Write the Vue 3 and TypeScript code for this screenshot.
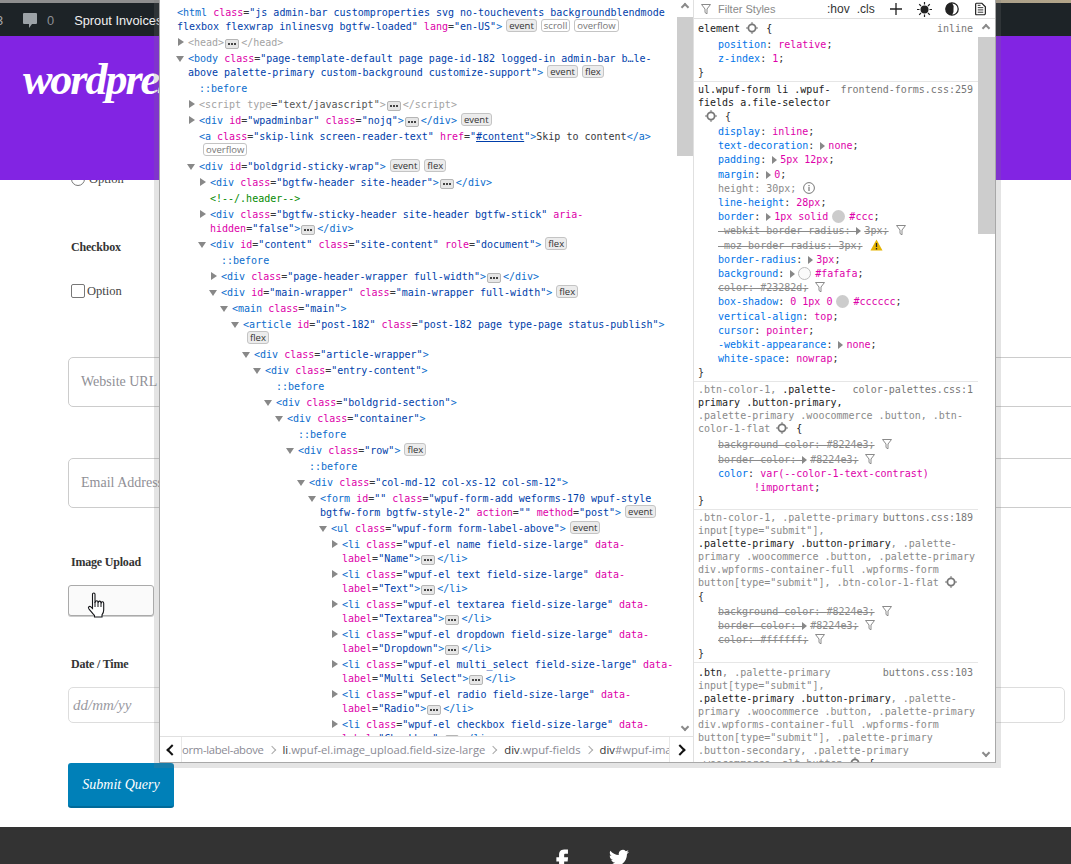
<template>
  <div class="page">
    <div class="top-strip"></div>
    <div class="adminbar">
      <span class="ab-count">3</span>
      <svg class="ab-bubble" width="14" height="15" viewBox="0 0 14 15"><path d="M1 0h12a1 1 0 0 1 1 1v9a1 1 0 0 1-1 1H9l-3 4v-4H1a1 1 0 0 1-1-1V1a1 1 0 0 1 1-1z" fill="#9ca2a7" /></svg>
      <span class="ab-zero">0</span>
      <span class="ab-link">Sprout Invoices</span>
    </div>
    <header class="site-head">
      <div class="logo">wordpress</div>
    </header>

    <main class="form-area">
      <div class="choice radio-row"><span class="radio"></span>Option</div>
      <div class="field-label checkbox-label">Checkbox</div>
      <div class="choice checkbox-row"><span class="check"></span>Option</div>
      <div class="text-input url-input">Website URL</div>
      <div class="text-input email-input">Email Address</div>
      <div class="field-label image-label">Image Upload</div>
      <div class="file-button">
        <svg class="hand" width="20" height="26" viewBox="0 0 20 26">
          <path d="M5.5 2.2c0-1.600 2.500-1.600 2.500 0v8l.5-.2c0-1.700 2.400-1.700 2.500 0l.4.2c.1-1.500 2.400-1.500 2.500.2l.4.300c.3-1.300 2.300-1.200 2.400.5v6.800c0 2.500-.8 3.700-1.700 4.800v2.200H7.500v-1.600c-1.800-1.600-3.500-4.200-5.600-6.600-1.300-1.600.6-3.200 2-1.900l1.600 1.500z" fill="#fff" stroke="#15161a" stroke-width="1.100" />
          <path d="M8 10v5M11 10v5M14 10.500V15" stroke="#15161a" fill="none" />
        </svg>
      </div>
      <div class="field-label date-label">Date / Time</div>
      <div class="date-input">dd/mm/yy</div>
      <button class="submit">Submit Query</button>
    </main>

    <footer class="site-foot">
      <svg width="16" height="26" viewBox="5 0 14 24"><path d="M14 8.500V6.300c0-.9.6-1.100 1-1.100h2.500V1.300H14c-3.800 0-4.700 2.800-4.700 4.600v2.600H6.800v4h2.500V24H14V12.500h3.200l.4-4z" fill="#fff" /></svg>
      <svg width="20" height="20" viewBox="0 0 24 24"><path d="M23.953 4.570a10 10 0 0 1-2.825.775 4.958 4.958 0 0 0 2.163-2.723c-.951.555-2.005.959-3.127 1.184a4.920 4.920 0 0 0-8.384 4.482C7.690 8.095 4.067 6.130 1.640 3.162a4.822 4.822 0 0 0-.666 2.475c0 1.710.870 3.213 2.188 4.096a4.904 4.904 0 0 1-2.228-.616v.060a4.923 4.923 0 0 0 3.946 4.827 4.996 4.996 0 0 1-2.212.085 4.936 4.936 0 0 0 4.604 3.417 9.867 9.867 0 0 1-6.102 2.105c-.39 0-.779-.023-1.170-.067a13.995 13.995 0 0 0 7.557 2.209c9.053 0 13.998-7.496 13.998-13.985 0-.21 0-.42-.015-.63A9.935 9.935 0 0 0 24 4.590z" fill="#fff" /></svg>
    </footer>

    <!-- devtools window floats over the page -->
    <section class="devtools">
      <div class="markup-pane">
        <div class="markup-scroll">
          <div
            v-for="(row, i) in markupRows"
            :key="i"
            class="node"
            :class="{ dim: row.dim }"
            :style="{ marginLeft: row.depth * 11 + 'px' }"
          >
            <span v-if="row.arrow" class="twisty" :class="row.arrow"></span>
            <template v-for="(t, j) in tokenize(row.text)" :key="j">
              <span v-if="t.kind === 'more'" class="more"><i></i><i></i><i></i></span>
              <span v-else-if="t.kind === 'badge'" class="badge">{{ t.text }}</span>
              <span v-else-if="t.kind === 'badge-off'" class="badge off">{{ t.text }}</span>
              <span v-else :class="'t-' + t.kind">{{ t.text }}</span>
            </template>
          </div>
        </div>
        <div class="scrollbar">
          <span class="sb-up"></span>
          <span class="sb-thumb markup-thumb"></span>
          <span class="sb-down"></span>
        </div>
        <div class="crumbs">
          <span class="crumb-btn"><span class="chev left"></span></span>
          <div class="crumb-list">
            <span class="c-grey c-first">orm-label-above</span>
            <span class="c-sep"></span>
            <span><b>li</b><span class="c-grey">.wpuf-el.image_upload.field-size-large</span></span>
            <span class="c-sep"></span>
            <span><b>div</b><span class="c-grey">.wpuf-fields</span></span>
            <span class="c-sep"></span>
            <span><b>div</b><span class="c-grey">#wpuf-image-upload</span></span>
          </div>
          <span class="crumb-btn right-btn"><span class="chev right"></span></span>
        </div>
      </div>

      <div class="rules-pane">
        <div class="toolbar">
          <svg class="funnel bar-funnel" width="10" height="11" viewBox="0 0 10 11"><path d="M.5.5h9L6 5v4.800L4 8.500V5z" fill="#fff" stroke="#8a8a8a" /></svg>
          <span class="filter-text">Filter Styles</span>
          <span class="tb-text hov">:hov</span>
          <span class="tb-text">.cls</span>
          <svg class="tb-icon tb-plus" width="12" height="12" viewBox="0 0 12 12"><path d="M6 0v12M0 6h12" stroke="#222" stroke-width="1.300" /></svg>
          <svg class="tb-icon tb-sun" width="15" height="15" viewBox="0 0 15 15"><circle cx="7.500" cy="7.500" r="4" fill="#222" /><path d="M7.500 0v2.500M7.500 12.500V15M0 7.500h2.500M12.500 7.500H15M2.200 2.200l1.800 1.800M11 11l1.800 1.800M2.200 12.800L4 11M11 4l1.800-1.800" stroke="#222" stroke-width="1.200" /></svg>
          <svg class="tb-icon tb-moon" width="14" height="14" viewBox="0 0 14 14"><circle cx="7" cy="7" r="6.200" fill="#fff" stroke="#222" stroke-width="1.300" /><path d="M7 .8a6.200 6.200 0 0 0 0 12.400 7.500 7.500 0 0 0 1.500-6.200A7.500 7.500 0 0 0 7 .8z" fill="#222" /></svg>
          <svg class="tb-icon tb-doc" width="11" height="14" viewBox="0 0 12 14"><path d="M1.500.7h6L11.300 4.500v7.300a1.500 1.500 0 0 1-1.500 1.500H1.500A1 1 0 0 1 .7 12V1.500a1 1 0 0 1 .8-.8z" fill="#fff" stroke="#222" stroke-width="1.300" /><path d="M3 5.500h6M3 8h6M3 10.500h6M3 3h3" stroke="#222" /></svg>
        </div>

        <div class="rules-scroll">
          <div v-for="(rule, i) in rules" :key="i" class="rule">
            <span class="source">{{ rule.source }}</span>
            <div class="selector">
              <span v-for="(part, j) in rule.selector" :key="j" :class="{ unmatched: j % 2 === 0 }">{{ part }}</span>
              <svg v-if="rule.braceBelow !== 'icon'" class="node-icon" width="12" height="12" viewBox="0 0 12 12"><use href="#node-glyph" /></svg>
              <template v-if="!rule.braceBelow"> {</template>
            </div>
            <div v-if="rule.braceBelow === 'icon'" class="brace-line"><svg class="node-icon first" width="12" height="12" viewBox="0 0 12 12"><use href="#node-glyph" /></svg> {</div>
            <div v-else-if="rule.braceBelow === 'plain'" class="brace-line">{</div>
            <div v-for="(d, j) in rule.decls" :key="j" class="decl" :class="{ inactive: d.info }">
              <span :class="{ struck: d.over }"><span class="prop">{{ d.name }}</span>: <span v-if="d.tri" class="tri"></span><span v-if="d.pre" class="val pre">{{ d.pre }} </span><span v-if="d.swatch" class="swatch" :class="{ light: d.swatch === '#fafafa' }" :style="{ background: d.swatch }"></span><span class="val">{{ d.value }}</span>;</span>
              <svg v-if="d.filter" class="funnel" width="10" height="11" viewBox="0 0 10 11"><path d="M.5.5h9L6 5v4.800L4 8.500V5z" fill="#fff" stroke="#8a8a8a" /></svg>
              <svg v-if="d.warn" class="warn" width="13" height="12" viewBox="0 0 13 12"><path d="M6.500.5l6 11H.5z" fill="#e5b400" /><path d="M6.500 4v4M6.500 9v1.500" stroke="#222" stroke-width="1.300" /></svg>
              <svg v-if="d.info" class="info" width="12" height="12" viewBox="0 0 12 12"><circle cx="6" cy="6" r="5.400" fill="none" stroke="#777" /><path d="M6 5v4M6 3v1.200" stroke="#777" stroke-width="1.200" /></svg>
            </div>
            <div v-if="rule.decls.length" class="close-brace">}</div>
          </div>
        </div>
        <div class="scrollbar rules-bar">
          <span class="sb-up rules-up"></span>
          <span class="sb-thumb rules-thumb"></span>
          <span class="sb-down"></span>
        </div>
      </div>
    </section>

    <svg width="0" height="0" class="glyph-defs">
      <symbol id="node-glyph" viewBox="0 0 12 12">
        <circle cx="6" cy="6" r="3.600" fill="#fff" stroke="#777" stroke-width="1.800" />
        <path d="M6 0v2.500M6 9.500V12M0 6h2.500M9.500 6H12" stroke="#777" />
      </symbol>
    </svg>
  </div>
</template>

<script setup lang="ts">
interface MarkupRow {
  depth: number
  arrow?: 'open' | 'closed'
  dim?: boolean
  text: string
}

interface Token {
  kind: string
  text: string
}

interface Decl {
  name: string
  value: string
  pre?: string
  over?: boolean
  tri?: boolean
  swatch?: string
  filter?: boolean
  warn?: boolean
  info?: boolean
}

interface Rule {
  source: string
  selector: string[]
  braceBelow?: 'icon' | 'plain'
  decls: Decl[]
}

// [[x]] is a badge, [[~x]] a light badge and [[.]] the collapsed-children pill
const markupRows: MarkupRow[] = [
  { depth: 0, text: '<html class="js admin-bar customproperties svg no-touchevents backgroundblendmode\nflexbox flexwrap inlinesvg bgtfw-loaded" lang="en-US">[[event]][[~scroll]][[~overflow]]' },
  { depth: 1, arrow: 'closed', dim: true, text: '<head>[[.]]</head>' },
  { depth: 1, arrow: 'open', text: '<body class="page-template-default page page-id-182 logged-in admin-bar b…le-\nabove palette-primary custom-background customize-support">[[event]][[flex]]' },
  { depth: 2, text: '::before' },
  { depth: 2, arrow: 'closed', dim: true, text: '<script type="text/javascript">[[.]]</' + 'script>' },
  { depth: 2, arrow: 'closed', text: '<div id="wpadminbar" class="nojq">[[.]]</div>[[event]]' },
  { depth: 2, text: '<a class="skip-link screen-reader-text" href="#content">Skip to content</a>\n[[~overflow]]' },
  { depth: 2, arrow: 'open', text: '<div id="boldgrid-sticky-wrap">[[event]][[flex]]' },
  { depth: 3, arrow: 'closed', text: '<div class="bgtfw-header site-header">[[.]]</div>' },
  { depth: 3, text: '<!--/.header-->' },
  { depth: 3, arrow: 'closed', text: '<div class="bgtfw-sticky-header site-header bgtfw-stick" aria-\nhidden="false">[[.]]</div>' },
  { depth: 3, arrow: 'open', text: '<div id="content" class="site-content" role="document">[[flex]]' },
  { depth: 4, text: '::before' },
  { depth: 4, arrow: 'closed', text: '<div class="page-header-wrapper full-width">[[.]]</div>' },
  { depth: 4, arrow: 'open', text: '<div id="main-wrapper" class="main-wrapper full-width">[[flex]]' },
  { depth: 5, arrow: 'open', text: '<main class="main">' },
  { depth: 6, arrow: 'open', text: '<article id="post-182" class="post-182 page type-page status-publish">\n[[flex]]' },
  { depth: 7, arrow: 'open', text: '<div class="article-wrapper">' },
  { depth: 8, arrow: 'open', text: '<div class="entry-content">' },
  { depth: 9, text: '::before' },
  { depth: 9, arrow: 'open', text: '<div class="boldgrid-section">' },
  { depth: 10, arrow: 'open', text: '<div class="container">' },
  { depth: 11, text: '::before' },
  { depth: 11, arrow: 'open', text: '<div class="row">[[flex]]' },
  { depth: 12, text: '::before' },
  { depth: 12, arrow: 'open', text: '<div class="col-md-12 col-xs-12 col-sm-12">' },
  { depth: 13, arrow: 'open', text: '<form id="" class="wpuf-form-add weforms-170 wpuf-style\nbgtfw-form bgtfw-style-2" action="" method="post">[[event]]' },
  { depth: 14, arrow: 'open', text: '<ul class="wpuf-form form-label-above">[[event]]' },
  { depth: 15, arrow: 'closed', text: '<li class="wpuf-el name field-size-large" data-\nlabel="Name">[[.]]</li>' },
  { depth: 15, arrow: 'closed', text: '<li class="wpuf-el text field-size-large" data-\nlabel="Text">[[.]]</li>' },
  { depth: 15, arrow: 'closed', text: '<li class="wpuf-el textarea field-size-large" data-\nlabel="Textarea">[[.]]</li>' },
  { depth: 15, arrow: 'closed', text: '<li class="wpuf-el dropdown field-size-large" data-\nlabel="Dropdown">[[.]]</li>' },
  { depth: 15, arrow: 'closed', text: '<li class="wpuf-el multi_select field-size-large" data-\nlabel="Multi Select">[[.]]</li>' },
  { depth: 15, arrow: 'closed', text: '<li class="wpuf-el radio field-size-large" data-\nlabel="Radio">[[.]]</li>' },
  { depth: 15, arrow: 'closed', text: '<li class="wpuf-el checkbox field-size-large" data-\nlabel="Checkbox">[[.]]</li>' },
]

const tokenPattern = /\[\[(.+?)\]\]|<!--[\s\S]*?-->|::before|<\/?\w+|\/?>|([\w-]+\n?[\w-]*)=|"[^"]*"|[^<>"[\w-]+|[\w-]+|./g

function tokenize(text: string): Token[] {
  const tokens: Token[] = []
  for (const m of text.matchAll(tokenPattern)) {
    const s = m[0]
    if (m[1] === '.') tokens.push({ kind: 'more', text: '' })
    else if (m[1]?.startsWith('~')) tokens.push({ kind: 'badge-off', text: m[1].slice(1) })
    else if (m[1]) tokens.push({ kind: 'badge', text: m[1] })
    else if (s.startsWith('<!--')) tokens.push({ kind: 'comment', text: s })
    else if (s === '::before' || s.startsWith('<') || s === '>') tokens.push({ kind: 'tag', text: s })
    else if (m[2]) tokens.push({ kind: 'attr', text: m[2] }, { kind: 'plain', text: '=' })
    else if (s === '"#content"') {
      tokens.push({ kind: 'value', text: '"' }, { kind: 'link', text: '#content' }, { kind: 'value', text: '"' })
    } else if (s.startsWith('"')) tokens.push({ kind: 'value', text: s })
    else tokens.push({ kind: 'plain', text: s })
  }
  return tokens
}

// odd selector parts are the ones that match the selected element
const rules: Rule[] = [
  {
    source: 'inline',
    selector: ['', 'element'],
    decls: [
      { name: 'position', value: 'relative' },
      { name: 'z-index', value: '1' },
    ],
  },
  {
    source: 'frontend-forms.css:259',
    selector: ['', 'ul.wpuf-form li .wpuf-\nfields a.file-selector'],
    braceBelow: 'icon',
    decls: [
      { name: 'display', value: 'inline' },
      { name: 'text-decoration', value: 'none', tri: true },
      { name: 'padding', value: '5px 12px', tri: true },
      { name: 'margin', value: '0', tri: true },
      { name: 'height', value: '30px', info: true },
      { name: 'line-height', value: '28px' },
      { name: 'border', pre: '1px solid', value: '#ccc', tri: true, swatch: '#ccc' },
      { name: '-webkit-border-radius', value: '3px', over: true, tri: true, filter: true },
      { name: '-moz-border-radius', value: '3px', over: true, warn: true },
      { name: 'border-radius', value: '3px', tri: true },
      { name: 'background', value: '#fafafa', tri: true, swatch: '#fafafa' },
      { name: 'color', value: '#23282d', over: true, filter: true },
      { name: 'box-shadow', pre: '0 1px 0', value: '#cccccc', swatch: '#ccc' },
      { name: 'vertical-align', value: 'top' },
      { name: 'cursor', value: 'pointer' },
      { name: '-webkit-appearance', value: 'none', tri: true },
      { name: 'white-space', value: 'nowrap' },
    ],
  },
  {
    source: 'color-palettes.css:1',
    selector: ['.btn-color-1, ', '.palette-\nprimary .button-primary,', '\n.palette-primary .woocommerce .button, .btn-\ncolor-1-flat'],
    decls: [
      { name: 'background-color', value: '#8224e3', over: true, filter: true },
      { name: 'border-color', value: '#8224e3', over: true, tri: true, filter: true },
      { name: 'color', value: 'var(--color-1-text-contrast)\n      !important' },
    ],
  },
  {
    source: 'buttons.css:189',
    selector: ['.btn-color-1, .palette-primary\ninput[type="submit"],\n', '.palette-primary .button-primary', ', .palette-\nprimary .woocommerce .button, .palette-primary\ndiv.wpforms-container-full .wpforms-form\nbutton[type="submit"], .btn-color-1-flat'],
    braceBelow: 'plain',
    decls: [
      { name: 'background-color', value: '#8224e3', over: true, filter: true },
      { name: 'border-color', value: '#8224e3', over: true, tri: true, filter: true },
      { name: 'color', value: '#ffffff', over: true, filter: true },
    ],
  },
  {
    source: 'buttons.css:103',
    selector: ['', '.btn', ', .palette-primary\ninput[type="submit"],\n', '.palette-primary .button-primary', ', .palette-\nprimary .woocommerce .button, .palette-primary\ndiv.wpforms-container-full .wpforms-form\nbutton[type="submit"], .palette-primary\n.button-secondary, .palette-primary\n.woocommerce .alt.button'],
    decls: [],
  },
]
</script>

<style scoped>
.page {
  position: relative;
  width: 1071px;
  height: 864px;
  overflow: hidden;
  background: #fff;
  display: flex;
  flex-direction: column;
  font-family: "Liberation Serif", serif;
}
.top-strip {
  height: 3px;
  background: linear-gradient(90deg, #8e8e8e 0%, #8e8e8e 70%, #b3a589 100%);
}
.adminbar {
  height: 33px;
  flex: none;
  box-sizing: border-box;
  padding-top: 2px;
  background: #1d2327;
  color: #f0f0f1;
  display: flex;
  align-items: center;
  font-family: "Liberation Sans", sans-serif;
  font-size: 12.800px;
  position: relative;
  z-index: 2;
}
.ab-count {
  margin-left: -4px;
  color: #a7aaad;
  width: 27px;
}
.ab-bubble {
  flex: none;
}
.ab-zero {
  margin-left: 10px;
  color: #8c8f94;
}
.ab-link {
  margin-left: 20px;
  white-space: nowrap;
}
.site-head {
  height: 144px;
  flex: none;
  box-sizing: border-box;
  background: #8224e3;
  position: relative;
  z-index: 1;
  overflow: hidden;
  padding: 11px 0 0 23px;
}
.logo {
  color: #fff;
  font-size: 44px;
  line-height: 66px;
  font-style: italic;
  font-weight: 700;
  letter-spacing: -2px;
}
.form-area {
  flex: 1;
  padding-left: 68px;
  display: flex;
  flex-direction: column;
  align-items: flex-start;
}
.choice {
  display: flex;
  align-items: center;
  font-size: 12.500px;
  color: #444;
  padding-left: 3px;
}
.radio-row {
  height: 14px;
  margin-top: -8px;
}
.radio {
  width: 12px;
  height: 12px;
  border: 1px solid #777;
  border-radius: 50%;
  margin-right: 4px;
}
.check {
  width: 12px;
  height: 12px;
  border: 1px solid #777;
  border-radius: 2px;
  margin-right: 2px;
}
.field-label {
  height: 18px;
  line-height: 18px;
  font-size: 12px;
  font-weight: 700;
  letter-spacing: -0.2px;
  color: #333;
  padding-left: 3px;
}
.checkbox-label {
  margin-top: 52px;
}
.checkbox-row {
  height: 18px;
  margin-top: 26px;
}
.text-input {
  width: 1020px;
  height: 50px;
  flex: none;
  border: 1px solid #ccc;
  border-radius: 5px;
  padding-left: 12px;
  box-sizing: border-box;
  display: flex;
  align-items: center;
  font-size: 14px;
  color: #8f8f96;
}
.url-input {
  margin-top: 57px;
}
.email-input {
  margin-top: 51px;
}
.image-label {
  margin-top: 45px;
}
.file-button {
  position: relative;
  width: 86px;
  height: 31px;
  margin-top: 14px;
  box-sizing: border-box;
  border: 1px solid #aaa;
  border-radius: 3px;
  background: #fafafa;
  box-shadow: 0 1px 0 #ccc;
}
.hand {
  position: absolute;
  left: 18px;
  top: 6px;
}
.date-label {
  margin-top: 39px;
}
.date-input {
  width: 997px;
  height: 36px;
  flex: none;
  margin-top: 14px;
  box-sizing: border-box;
  border: 1px solid #ddd;
  border-radius: 5px;
  padding-left: 4px;
  display: flex;
  align-items: center;
  font-size: 15px;
  font-style: italic;
  color: #9a9aa2;
}
.submit {
  width: 106px;
  height: 45px;
  margin-top: 40px;
  border: none;
  border-bottom: 2px solid #006a99;
  border-radius: 3px;
  background: #0080b8;
  color: #fff;
  font-family: "Liberation Serif", serif;
  font-size: 14px;
  font-style: italic;
}
.site-foot {
  height: 37px;
  flex: none;
  background: #333;
  display: flex;
  justify-content: center;
  gap: 39px;
  padding: 21px 0 0 112px;
  box-sizing: border-box;
  overflow: hidden;
}
.site-foot svg {
  flex: none;
}

/* devtools window */
.devtools {
  position: absolute;
  left: 159px;
  top: 0;
  width: 837px;
  height: 763px;
  box-sizing: border-box;
  background: #fff;
  border-left: 1px solid #a8a8a8;
  border-right: 1px solid #a8a8a8;
  border-bottom: 1px solid #a8a8a8;
  box-shadow: 0 0 0 5px rgba(120, 120, 120, 0.2);
  display: flex;
  font-family: "DejaVu Sans Mono", monospace;
  font-size: 10px;
  z-index: 5;
}
.markup-pane {
  position: relative;
  width: 533px;
  flex: none;
  display: flex;
  flex-direction: column;
  border-right: 1px solid #e0e0e0;
}
.markup-scroll {
  flex: 1;
  overflow: hidden;
  padding: 5px 0 0 17px;
  min-height: 0;
}
.node {
  position: relative;
  white-space: pre;
  line-height: 14px;
  padding: 1px 0;
}
.twisty {
  position: absolute;
  left: -11px;
  top: 3px;
  width: 0;
  height: 0;
}
.twisty.closed {
  border-left: 6px solid #888;
  border-top: 4.500px solid transparent;
  border-bottom: 4.500px solid transparent;
  margin-left: 1px;
}
.twisty.open {
  top: 5px;
  border-top: 6px solid #888;
  border-left: 4.500px solid transparent;
  border-right: 4.500px solid transparent;
  margin-left: -1px;
}
.t-tag {
  color: #0a6ccc;
}
.t-attr {
  color: #dd00a9;
}
.t-value,
.t-link {
  color: #003eaa;
}
.t-link {
  text-decoration: underline;
}
.t-plain {
  color: #38383d;
}
.t-comment {
  color: #058b00;
}
.dim .t-tag {
  color: #a3a3a3;
}
.dim .t-attr {
  color: #a3a3a3;
}
.dim .t-value {
  color: #555;
}
.badge {
  position: relative;
  top: -1px;
  display: inline-block;
  height: 11px;
  line-height: 11px;
  margin-left: 4px;
  padding: 0 2px;
  font-family: "Open Sans", sans-serif;
  font-size: 9.500px;
  color: #333;
  background: #ececec;
  border: 1px solid #c4c4c4;
  border-radius: 3px;
  vertical-align: 0;
}
.badge.off {
  background: #fff;
  color: #777;
}
.more {
  position: relative;
  top: -1px;
  display: inline-flex;
  align-items: center;
  justify-content: center;
  gap: 1px;
  width: 12px;
  height: 8px;
  margin: 0 2px 0 1px;
  background: #e6e6e6;
  border: 1px solid #b5b5b5;
  border-radius: 2px;
  vertical-align: 0;
}
.more i {
  width: 2px;
  height: 2px;
  background: #444;
}
.scrollbar {
  position: absolute;
  right: 0;
  top: 0;
  bottom: 26px;
  width: 16px;
}
.sb-thumb {
  position: absolute;
  left: 0;
  width: 16px;
  background: #cdcdcd;
}
.markup-thumb {
  top: 17px;
  height: 139px;
}
.sb-up,
.sb-down {
  position: absolute;
  left: 5px;
  width: 6px;
  height: 6px;
  border-left: 2px solid #8a8a8a;
  border-top: 2px solid #8a8a8a;
  box-sizing: border-box;
}
.sb-up {
  top: 4px;
  transform: rotate(45deg);
}
.sb-down {
  bottom: 6px;
  transform: rotate(225deg);
}
.rules-up {
  top: 25px;
}
.crumbs {
  height: 26px;
  flex: none;
  display: flex;
  border-top: 1px solid #e0e0e0;
  box-sizing: border-box;
  font-family: "Open Sans", sans-serif;
  font-size: 11.250px;
  background: #fff;
  position: relative;
}
.crumb-btn {
  width: 21px;
  flex: none;
  border-right: 1px solid #e8e8e8;
  display: flex;
  align-items: center;
  justify-content: center;
}
.right-btn {
  width: 23px;
  border-right: none;
  border-left: 1px solid #e8e8e8;
}
.chev {
  width: 8px;
  height: 8px;
  box-sizing: border-box;
  border-left: 2px solid #111;
  border-bottom: 2px solid #111;
}
.chev.left {
  transform: rotate(45deg);
  margin-left: 3px;
}
.chev.right {
  transform: rotate(225deg);
  margin-right: 3px;
}
.crumb-list {
  flex: 1;
  overflow: hidden;
  white-space: nowrap;
  display: flex;
  align-items: center;
  min-width: 0;
  color: #333;
}
.crumb-list b {
  font-weight: 400;
}
.c-grey {
  color: #8a8a94;
}
.c-first {
  letter-spacing: -0.3px;
}
.c-sep {
  flex: none;
  width: 5px;
  height: 5px;
  margin: 0 8px 0 5px;
  border-top: 1px solid #aaa;
  border-right: 1px solid #aaa;
  transform: rotate(45deg);
}
.rules-pane {
  position: relative;
  flex: 1;
  min-width: 0;
  overflow: hidden;
}
.toolbar {
  height: 19px;
  box-sizing: border-box;
  border-bottom: 1px solid #e0e0e0;
  display: flex;
  align-items: center;
  position: relative;
  font-family: "Liberation Sans", sans-serif;
  font-size: 12px;
  color: #333;
}
.bar-funnel {
  margin-left: 8px;
}
.filter-text {
  margin-left: 7px;
  color: #8a8a8a;
  width: 109px;
  font-size: 11px;
}
.tb-text {
  margin-right: 10px;
}
.hov {
  margin-right: 7px;
}
.tb-icon {
  flex: none;
}
.tb-plus {
  margin-left: 5px;
}
.tb-sun {
  margin-left: 15px;
}
.tb-moon {
  margin-left: 13px;
}
.tb-doc {
  margin-left: 16px;
}
.rules-scroll {
  margin-right: 17px;
}
.rule {
  padding: 1px 5px 2px 4px;
  border-bottom: 1px solid #e6e6e6;
  color: #333;
}
.rule:first-child {
  padding-top: 3px;
}
.rule:last-child {
  padding-top: 3px;
  border-bottom: none;
}
.rule:nth-child(3) .close-brace {
  margin-top: -1px;
}
.source {
  float: right;
  line-height: 13px;
  color: #777;
}
.selector {
  white-space: pre;
  line-height: 13px;
  color: #222;
  margin-bottom: 3px;
}
.unmatched {
  color: #8a8a8a;
}
.node-icon {
  vertical-align: -2px;
  margin-left: 6px;
  margin-right: 2px;
}
.node-icon.first {
  margin-left: 7px;
}
.brace-line {
  line-height: 15px;
  color: #333;
  margin-top: -3px;
  margin-bottom: 0.5px;
}
.decl {
  white-space: pre;
  line-height: 14.200px;
  padding-left: 20px;
}
.prop {
  color: #0074e8;
}
.val {
  color: #dd00a9;
}
.pre {
  margin-right: 4px;
}
.inactive .prop,
.inactive .val,
.inactive {
  color: #8a8a8a;
}
.struck,
.struck .prop,
.struck .val {
  color: #8a8a8a;
  text-decoration: line-through;
}
.tri {
  display: inline-block;
  width: 0;
  height: 0;
  border-left: 5px solid #888;
  border-top: 4px solid transparent;
  border-bottom: 4px solid transparent;
  margin-right: 3px;
  vertical-align: -1px;
}
.swatch {
  display: inline-block;
  width: 13px;
  height: 13px;
  margin-right: 4px;
  box-sizing: border-box;
  border-radius: 50%;
  vertical-align: -3px;
}
.swatch.light {
  border: 1px solid #bbb;
}
.funnel,
.warn,
.info {
  margin-left: 7px;
  vertical-align: -2px;
}
.close-brace {
  line-height: 13px;
}
.rules-bar {
  bottom: 0;
  right: 0;
  width: 17px;
}
.rules-thumb {
  top: 37px;
  height: 197px;
  width: 17px;
}
.glyph-defs {
  position: absolute;
}
</style>
